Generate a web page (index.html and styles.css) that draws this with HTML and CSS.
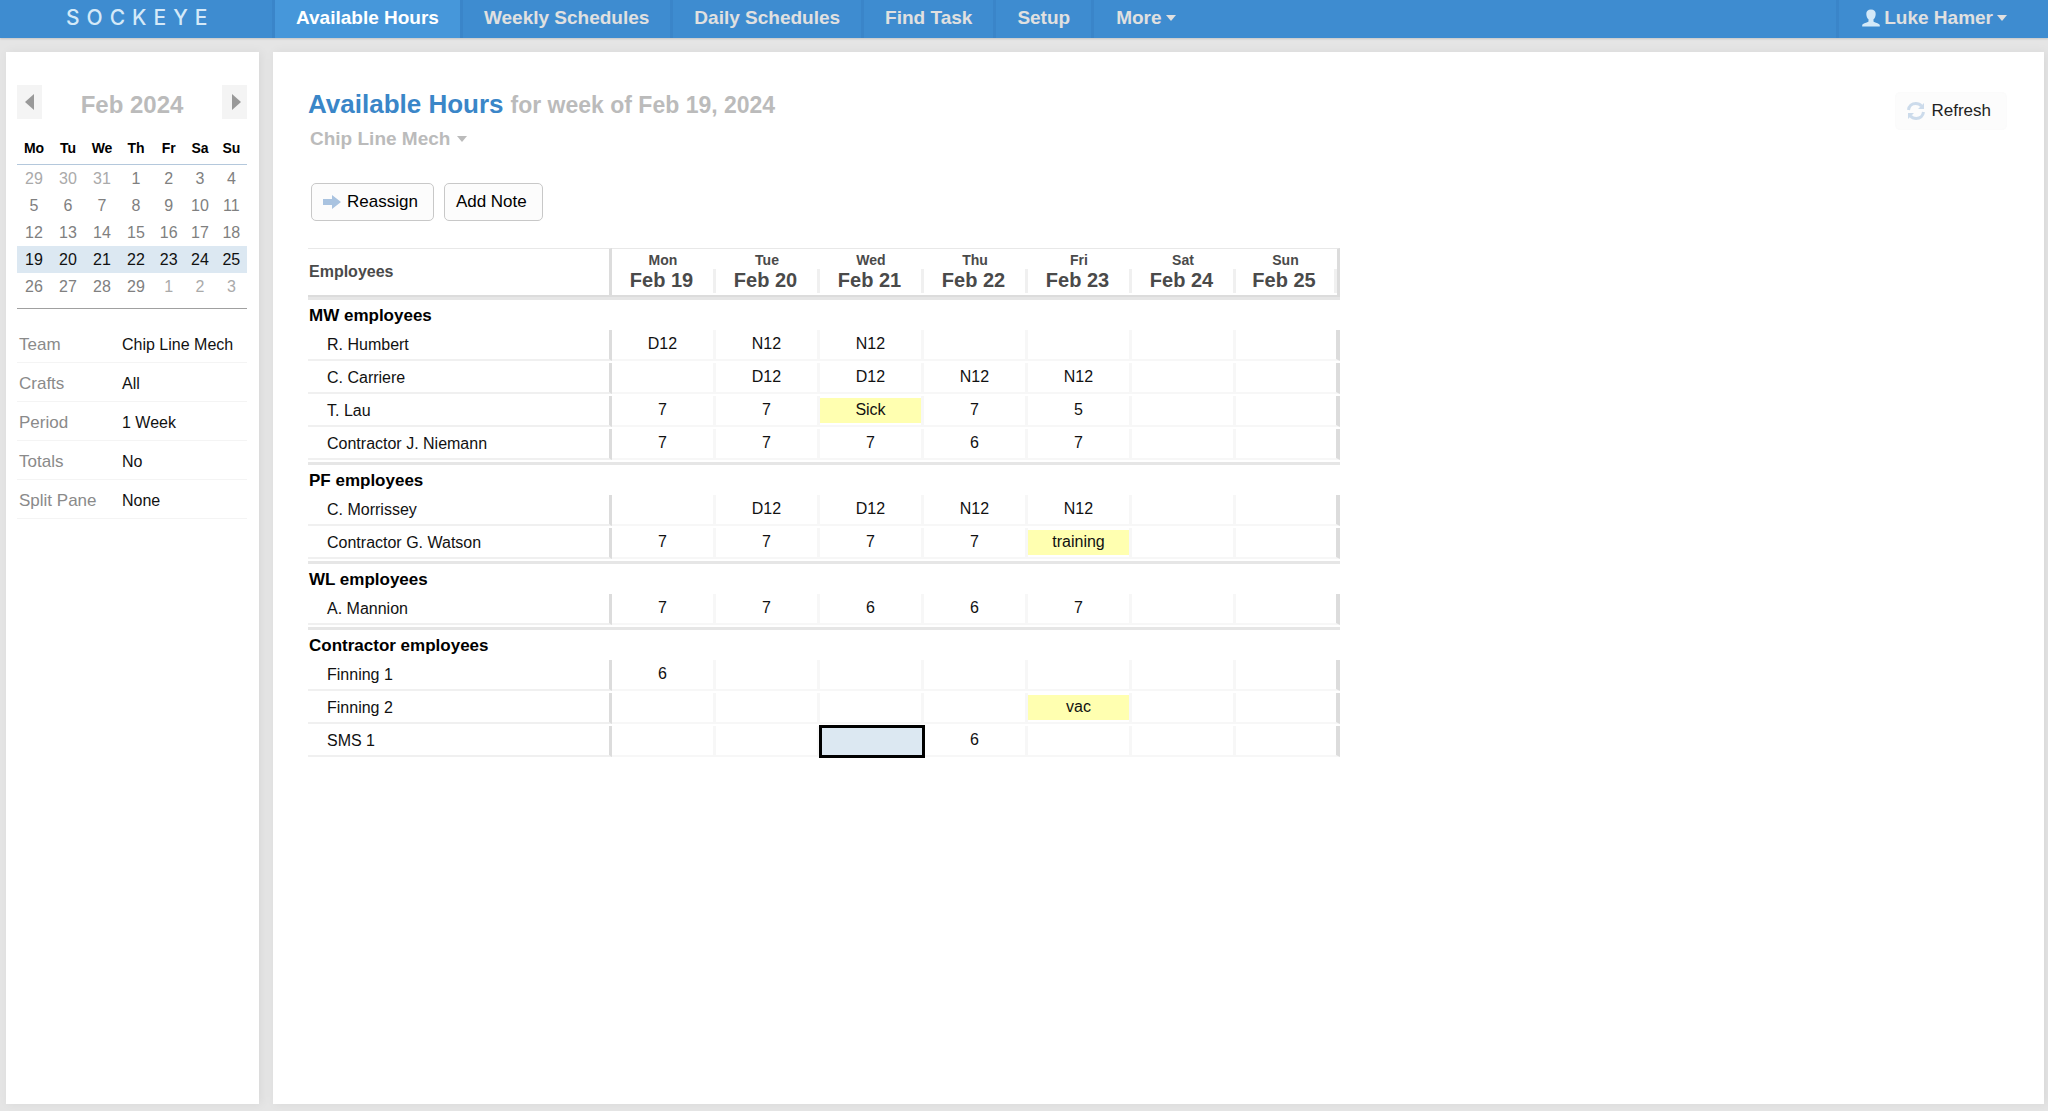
FILE: index.html
```html
<!DOCTYPE html>
<html lang="en">
<head>
    <meta charset="UTF-8">
    <meta name="viewport" content="width=device-width, initial-scale=1.0">
    <title>Available Hours - Sockeye</title>
    <link rel="stylesheet" href="styles.css">
</head>
<body>

    <!-- Top navigation -->
    <header class="navbar">
        <a class="logo" href="#">SOCKEYE</a>
        <nav class="nav-links">
            <a class="active" href="#">Available Hours</a>
            <a href="#">Weekly Schedules</a>
            <a href="#">Daily Schedules</a>
            <a href="#">Find Task</a>
            <a href="#">Setup</a>
            <button type="button" class="nav-menu">More <span class="caret"></span></button>
        </nav>
        <button type="button" class="nav-menu user-menu">
            <svg class="user-icon" width="18" height="18" viewBox="0 0 18 18" aria-hidden="true">
                <path d="M9 0.5C6 0.500 4.200 2.200 4.300 4.900C4.400 7.400 5.200 9.200 6.500 10.300V12.400C5.400 13.800 0.500 14 0.200 16V17.500H17.800V16C17.500 14 12.600 13.800 11.500 12.400V10.300C12.800 9.200 13.600 7.400 13.700 4.900C13.800 2.200 12 0.500 9 0.500Z"/>
            </svg>
            <span>Luke Hamer</span>
            <span class="caret"></span>
        </button>
    </header>

    <div class="page">

        <!-- Sidebar with calendar and filters -->
        <aside class="sidebar">
            <div class="month">
                <button type="button" aria-label="Previous month">
                    <svg width="9" height="16" viewBox="0 0 9 16"><path d="M9 0V16L0 8Z"/></svg>
                </button>
                <h2>Feb 2024</h2>
                <button type="button" class="next" aria-label="Next month">
                    <svg width="9" height="16" viewBox="0 0 9 16"><path d="M0 0V16L9 8Z"/></svg>
                </button>
            </div>

            <table class="calendar">
                <colgroup>
                    <col class="wide" span="4">
                    <col span="3">
                </colgroup>
                <thead>
                    <tr><th>Mo</th><th>Tu</th><th>We</th><th>Th</th><th>Fr</th><th>Sa</th><th>Su</th></tr>
                </thead>
                <tbody>
                    <tr><td class="other">29</td><td class="other">30</td><td class="other">31</td><td>1</td><td>2</td><td>3</td><td>4</td></tr>
                    <tr><td>5</td><td>6</td><td>7</td><td>8</td><td>9</td><td>10</td><td>11</td></tr>
                    <tr><td>12</td><td>13</td><td>14</td><td>15</td><td>16</td><td>17</td><td>18</td></tr>
                    <tr class="current"><td>19</td><td>20</td><td>21</td><td>22</td><td>23</td><td>24</td><td>25</td></tr>
                    <tr><td>26</td><td>27</td><td>28</td><td>29</td><td class="other">1</td><td class="other">2</td><td class="other">3</td></tr>
                </tbody>
            </table>

            <dl class="filters">
                <div><dt>Team</dt><dd>Chip Line Mech</dd></div>
                <div><dt>Crafts</dt><dd>All</dd></div>
                <div><dt>Period</dt><dd>1 Week</dd></div>
                <div><dt>Totals</dt><dd>No</dd></div>
                <div><dt>Split Pane</dt><dd>None</dd></div>
            </dl>
        </aside>

        <!-- Main content -->
        <main class="content">
            <div class="content-header">
                <div>
                    <div class="title">
                        <h1>Available Hours</h1>
                        <p>for week of Feb 19, 2024</p>
                    </div>
                    <div class="team">
                        <select aria-label="Team">
                            <option>Chip Line Mech</option>
                        </select>
                        <span class="caret"></span>
                    </div>
                </div>
                <button type="button" class="btn btn-refresh">
                    <svg width="18" height="18" viewBox="0 0 18 18" aria-hidden="true">
                        <path class="line" d="M1.500 8C2 4 5 1.500 8.800 1.500C11.200 1.500 13.200 2.500 14.500 4.200M16.500 10C16 14 13 16.500 9.200 16.500C6.800 16.500 4.800 15.500 3.500 13.800"/>
                        <path d="M17 1V7H11ZM1 17V11H7Z"/>
                    </svg>
                    Refresh
                </button>
            </div>

            <div class="toolbar">
                <button type="button" class="btn">
                    <svg width="18" height="14" viewBox="0 0 18 14" aria-hidden="true"><path d="M0 4H9V0L18 7L9 14V10H0Z"/></svg>
                    Reassign
                </button>
                <button type="button" class="btn">Add Note</button>
            </div>

            <table class="hours">
                <colgroup>
                    <col class="name-col">
                    <col span="7">
                </colgroup>
                <thead>
                    <tr>
                        <th scope="col">Employees</th>
                        <th scope="col"><span class="day">Mon</span><span class="date">Feb 19</span></th>
                        <th scope="col"><span class="day">Tue</span><span class="date">Feb 20</span></th>
                        <th scope="col"><span class="day">Wed</span><span class="date">Feb 21</span></th>
                        <th scope="col"><span class="day">Thu</span><span class="date">Feb 22</span></th>
                        <th scope="col"><span class="day">Fri</span><span class="date">Feb 23</span></th>
                        <th scope="col"><span class="day">Sat</span><span class="date">Feb 24</span></th>
                        <th scope="col"><span class="day">Sun</span><span class="date">Feb 25</span></th>
                    </tr>
                </thead>
                <tbody>
                    <tr class="group"><th colspan="8">MW employees</th></tr>
                    <tr><th scope="row">R. Humbert</th><td>D12</td><td>N12</td><td>N12</td><td></td><td></td><td></td><td></td></tr>
                    <tr><th scope="row">C. Carriere</th><td></td><td>D12</td><td>D12</td><td>N12</td><td>N12</td><td></td><td></td></tr>
                    <tr><th scope="row">T. Lau</th><td>7</td><td>7</td><td><span class="away">Sick</span></td><td>7</td><td>5</td><td></td><td></td></tr>
                    <tr><th scope="row">Contractor J. Niemann</th><td>7</td><td>7</td><td>7</td><td>6</td><td>7</td><td></td><td></td></tr>
                </tbody>
                <tbody>
                    <tr class="group"><th colspan="8">PF employees</th></tr>
                    <tr><th scope="row">C. Morrissey</th><td></td><td>D12</td><td>D12</td><td>N12</td><td>N12</td><td></td><td></td></tr>
                    <tr><th scope="row">Contractor G. Watson</th><td>7</td><td>7</td><td>7</td><td>7</td><td><span class="away">training</span></td><td></td><td></td></tr>
                </tbody>
                <tbody>
                    <tr class="group"><th colspan="8">WL employees</th></tr>
                    <tr><th scope="row">A. Mannion</th><td>7</td><td>7</td><td>6</td><td>6</td><td>7</td><td></td><td></td></tr>
                </tbody>
                <tbody>
                    <tr class="group"><th colspan="8">Contractor employees</th></tr>
                    <tr><th scope="row">Finning 1</th><td>6</td><td></td><td></td><td></td><td></td><td></td><td></td></tr>
                    <tr><th scope="row">Finning 2</th><td></td><td></td><td></td><td></td><td><span class="away">vac</span></td><td></td><td></td></tr>
                    <tr><th scope="row">SMS 1</th><td></td><td></td><td class="selected"></td><td>6</td><td></td><td></td><td></td></tr>
                </tbody>
            </table>
        </main>
    </div>

</body>
</html>
```
FILE: styles.css
```css
/* Basic reset */
* {
    margin: 0;
    padding: 0;
    box-sizing: border-box;
}

body {
    min-height: 100vh;
    display: flex;
    flex-direction: column;
    background: #e5e5e5;
    font-family: "Liberation Sans", Arial, sans-serif;
    font-size: 16px;
    color: #111;
}

button,
select {
    font: inherit;
    color: inherit;
    border: none;
    background: none;
    cursor: pointer;
}

a {
    color: inherit;
    text-decoration: none;
}

.caret {
    width: 0;
    height: 0;
    border-left: 5px solid transparent;
    border-right: 5px solid transparent;
    border-top: 6px solid currentColor;
}

/* Top navigation */
.navbar {
    display: flex;
    height: 38px;
    background: #3e8cd0;
    box-shadow: 0 1px 2px rgba(0, 0, 0, 0.15);
    color: #e0e0e0;
    font-size: 19px;
    font-weight: bold;
    line-height: 36px;
}

.logo {
    width: 275px;
    padding-left: 66px;
    border-right: 3px solid #3a85c9;
    font-family: Inter, sans-serif;
    font-size: 21px;
    font-weight: 500;
    letter-spacing: 7px;
    color: #d4e9f8;
}

.nav-links {
    display: flex;
    flex: 1;
}

.nav-links a {
    padding: 0 21px;
    border-right: 3px solid #3a85c9;
}

.nav-links .active {
    background: #4697da;
    color: #fff;
}

.nav-menu {
    display: flex;
    align-items: center;
    gap: 4px;
    height: 38px;
    padding: 0 22px 2px;
    line-height: 36px;
}

.user-menu {
    padding: 0 41px 2px 23px;
    border-left: 3px solid #3a85c9;
}

.user-icon {
    fill: #d4e9f8;
}

/* Two panels under the navigation */
.page {
    display: flex;
    flex: 1;
    gap: 14px;
    padding: 14px 4px 7px 6px;
}

.sidebar,
.content {
    background: #fff;
    box-shadow: 2px 0 10px rgba(0, 0, 0, 0.06);
}

.sidebar {
    width: 253px;
    padding: 33px 12px 0 11px;
}

.month {
    display: flex;
    align-items: flex-end;
    justify-content: space-between;
}

.month h2 {
    font-size: 24px;
    line-height: 28px;
    color: #bbb;
}

.month button {
    display: flex;
    align-items: center;
    justify-content: center;
    width: 25px;
    height: 34px;
    background: #f4f4f4;
}

.month .next {
    padding-left: 4px;
}

.month svg {
    fill: #999;
}

.calendar {
    width: 100%;
    table-layout: fixed;
    border-collapse: collapse;
    text-align: center;
    color: #808080;
}

.calendar .wide {
    width: 34px;
}

.calendar th {
    padding: 21px 0 8px;
    border-bottom: 1px solid #b4c8dc;
    font-size: 14px;
    line-height: 16px;
    color: #000;
}

.calendar td {
    height: 27px;
    line-height: 27px;
}

.calendar .other {
    color: #aaa;
}

.calendar .current {
    background: #dce8f2;
    color: #111;
}

.filters {
    margin-top: 8px;
    padding-top: 15px;
    border-top: 1px solid #a0a0a0;
}

.filters div {
    display: flex;
    padding: 11px 0 7px 2px;
    border-bottom: 1px solid #f4f4f4;
    line-height: 20px;
}

.filters dt {
    width: 103px;
    font-size: 17px;
    color: #8a8a8a;
}

/* Main content */
.content {
    flex: 1;
    padding: 36px 37px 36px 35px;
}

.content-header {
    display: flex;
    align-items: flex-start;
    justify-content: space-between;
}

.title {
    display: flex;
    align-items: baseline;
    gap: 7px;
}

.title h1 {
    font-size: 26px;
    line-height: 32px;
    color: #3a86c8;
}

.title p {
    font-size: 23px;
    font-weight: bold;
    line-height: 32px;
    color: #bbb;
}

.team {
    display: flex;
    align-items: center;
    gap: 6px;
    margin-top: 6px;
    padding-left: 2px;
    font-size: 19px;
    font-weight: bold;
    line-height: 24px;
    color: #bbb;
}

.team select {
    appearance: none;
}

.btn {
    display: flex;
    align-items: center;
    gap: 6px;
    height: 38px;
    padding: 0 15px 0 11px;
    border: 1px solid #c8c8c8;
    border-radius: 5px;
    background: #fcfcfc;
    font-size: 17px;
    color: #000;
}

.btn svg {
    fill: #a9c3e0;
}

.btn-refresh {
    margin-top: 4px;
    border-color: #fbfbfb;
    color: #222;
}

.btn-refresh svg {
    fill: #ccdbeb;
}

.btn-refresh .line {
    fill: none;
    stroke: #ccdbeb;
    stroke-width: 3;
}

.toolbar {
    display: flex;
    gap: 10px;
    margin-top: 32px;
    padding-left: 3px;
}

/* Hours table */
.hours {
    width: 1032px;
    margin-top: 25px;
    table-layout: fixed;
    border-collapse: separate;
    border-spacing: 0 2px;
}

.hours .name-col {
    width: 304px;
}

.hours thead th {
    height: 47px;
    border-top: 1px solid #e8e8e8;
    box-shadow: 0 2px 0 #dcdcdc;
    color: #4a4a4a;
}

.hours thead th:first-child {
    padding-left: 1px;
    border-right: 3px solid #dcdcdc;
    text-align: left;
}

.hours thead th:last-child {
    border-right: 3px solid #dcdcdc;
}

.day,
.date {
    display: block;
    padding-right: 2px;
}

.day {
    font-size: 14px;
    line-height: 18px;
}

.date {
    padding-bottom: 2px;
    border-right: 3px solid #f0f0f0;
    font-size: 20px;
    line-height: 22px;
}

.hours .group th {
    height: 31px;
    padding: 3px 0 0 1px;
    border-top: 3px solid #e6e6e6;
    font-size: 17px;
    line-height: 25px;
    text-align: left;
    color: #000;
}

.hours tbody th[scope="row"] {
    height: 31px;
    padding: 1px 0 0 19px;
    border-right: 3px solid #dcdcdc;
    border-bottom: 2px solid #f0f0f0;
    font-weight: normal;
    text-align: left;
}

.hours td {
    padding-top: 2px;
    border-right: 3px solid #f7f7f7;
    border-bottom: 2px solid #f7f7f7;
    text-align: center;
    line-height: 23px;
    vertical-align: top;
}

.hours td:last-child {
    border-right: 4px solid #dcdcdc;
}

.away {
    display: block;
    padding-bottom: 2px;
    background: #ffffb0;
}

.hours .selected {
    border-color: transparent;
    background: #dce8f2;
    outline: 3px solid #000;
    outline-offset: -2px;
}
```
